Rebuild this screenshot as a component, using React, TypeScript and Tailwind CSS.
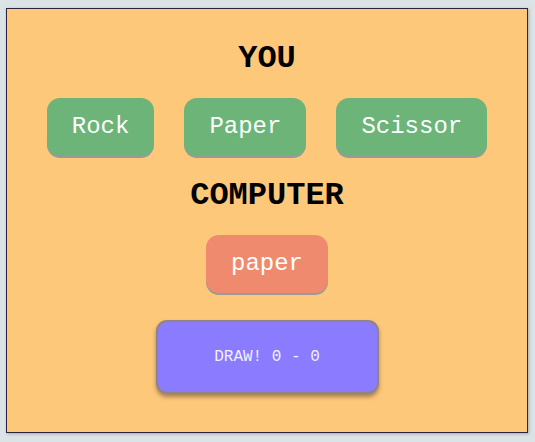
import { useState } from 'react'

type Choice = 'Rock' | 'Paper' | 'Scissor'

const CHOICES: Choice[] = ['Rock', 'Paper', 'Scissor']

export default function App() {
  const [computer] = useState('paper')
  const [score] = useState({ you: 0, computer: 0 })

  return (
    <div className="min-h-[442px] bg-[#dce3e6] pl-[6px] pt-[8px] pr-[7px] pb-[9px] font-['Liberation_Mono',monospace]">
      <div className="flex h-[425px] w-[522px] flex-col items-center border border-[#2b2340] bg-[#fec87a] pt-[32px] shadow-[1px_1px_3px_rgba(0,0,0,0.25)]">
        <h1 className="h-9 text-[32px] leading-9 font-bold text-black">YOU</h1>

        <div className="mt-[21px] flex gap-[30px]">
          {CHOICES.map((c) => (
            <button
              key={c}
              className="h-[58px] rounded-[13px] bg-[#6cb477] px-[25px] text-[24px] leading-8 text-white shadow-[0_2px_0_#9a9a9a]"
            >
              {c}
            </button>
          ))}
        </div>

        <h2 className="mt-[22px] h-9 text-[32px] leading-9 font-bold text-black">COMPUTER</h2>

        <div className="mt-[21px] flex h-[58px] w-[122px] items-center justify-center rounded-[13px] bg-[#f08a6e] text-[24px] text-white shadow-[0_2px_0_#9a9a9a]">
          {computer}
        </div>

        <div className="mt-[27px] flex h-[74px] w-[223px] items-center justify-center rounded-[11px] border-2 border-[#8f8585] bg-[#8a7bff] text-[16px] text-[#f4f0ff] shadow-[0_3px_4px_rgba(0,0,0,0.35)]">
          DRAW! {score.you} - {score.computer}
        </div>
      </div>
    </div>
  )
}
